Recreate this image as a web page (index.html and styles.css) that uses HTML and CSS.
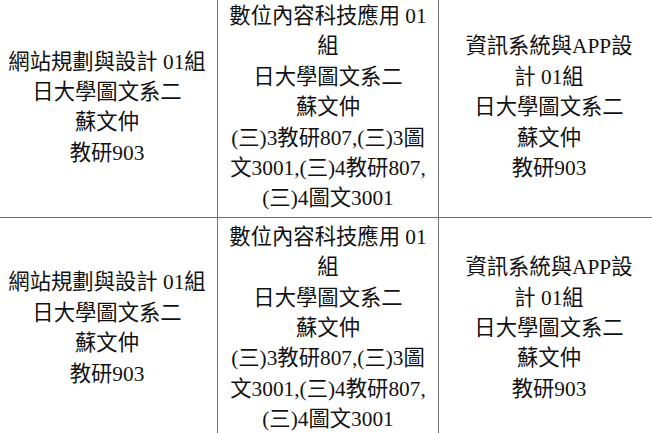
FILE: index.html
```html
<!DOCTYPE html>
<html lang="zh-Hant">
<head>
<meta charset="utf-8">
<title>課表</title>
<link rel="stylesheet" href="styles.css">
</head>
<body>
<div class="schedule">
  <div class="cell">
    <span class="line">網站規劃與設計 01組</span>
    <span class="line">日大學圖文系二</span>
    <span class="line">蘇文仲</span>
    <span class="line">教研903</span>
  </div>
  <div class="cell">
    <span class="line">數位內容科技應用 01</span>
    <span class="line">組</span>
    <span class="line">日大學圖文系二</span>
    <span class="line">蘇文仲</span>
    <span class="line">(三)3教研807,(三)3圖</span>
    <span class="line">文3001,(三)4教研807,</span>
    <span class="line">(三)4圖文3001</span>
  </div>
  <div class="cell">
    <span class="line">資訊系統與APP設</span>
    <span class="line">計 01組</span>
    <span class="line">日大學圖文系二</span>
    <span class="line">蘇文仲</span>
    <span class="line">教研903</span>
  </div>
  <div class="cell">
    <span class="line">網站規劃與設計 01組</span>
    <span class="line">日大學圖文系二</span>
    <span class="line">蘇文仲</span>
    <span class="line">教研903</span>
  </div>
  <div class="cell">
    <span class="line">數位內容科技應用 01</span>
    <span class="line">組</span>
    <span class="line">日大學圖文系二</span>
    <span class="line">蘇文仲</span>
    <span class="line">(三)3教研807,(三)3圖</span>
    <span class="line">文3001,(三)4教研807,</span>
    <span class="line">(三)4圖文3001</span>
  </div>
  <div class="cell">
    <span class="line">資訊系統與APP設</span>
    <span class="line">計 01組</span>
    <span class="line">日大學圖文系二</span>
    <span class="line">蘇文仲</span>
    <span class="line">教研903</span>
  </div>
</div>
</body>
</html>
```

FILE: styles.css
```css
html, body {
  margin: 0;
  padding: 0;
  background: #ffffff;
  overflow: hidden;
}

body {
  font-family: "Liberation Serif", "Noto Sans CJK TC", serif;
  font-size: 21.33px;
  line-height: 30.4px;
  color: #111111;
}

.schedule {
  display: grid;
  grid-template-columns: repeat(3, 221px);
  margin: -4px 0 0 -4px;
  border-top: 1px solid #707070;
  border-left: 1px solid #707070;
  width: max-content;
}

.cell {
  display: flex;
  flex-direction: column;
  justify-content: center;
  align-items: center;
  text-align: center;
  padding: 4px 2px 3px;
  border-right: 1px solid #707070;
  border-bottom: 1px solid #707070;
}

.line {
  display: block;
  white-space: nowrap;
}
```
